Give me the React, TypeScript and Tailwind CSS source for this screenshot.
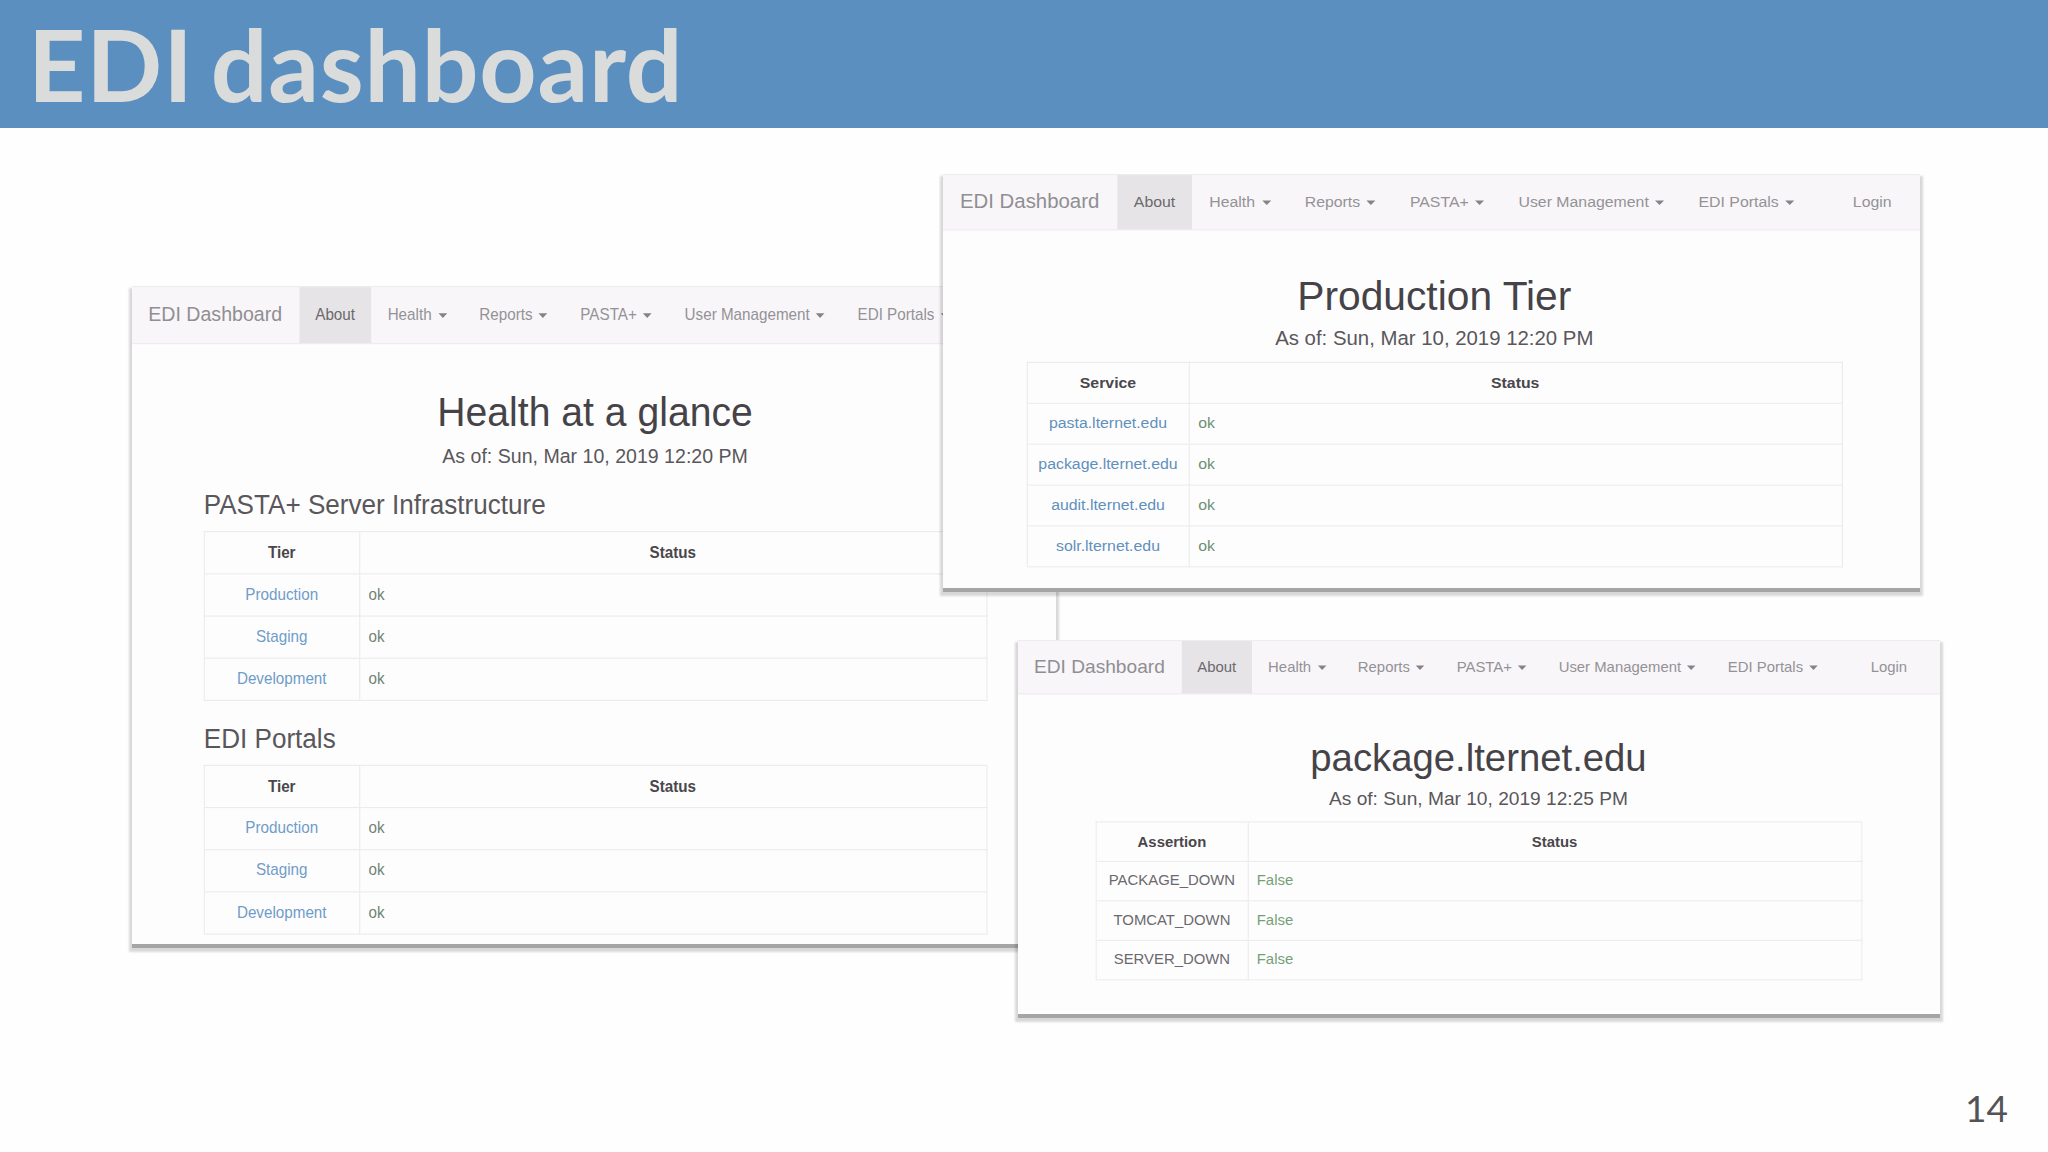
import type { ReactNode } from 'react'

const MENUS = ['Health', 'Reports', 'PASTA+', 'User Management', 'EDI Portals']

function Navbar({ loginPad }: { loginPad: string }) {
  return (
    <nav className="flex h-[51px] shrink-0 items-stretch whitespace-nowrap border-b border-t border-[#efecf0] bg-[#f8f6f9] text-[14px] text-[#949296]">
      <span className="flex items-center pl-[15px] pr-[15.5px] text-[18px] text-[#908e92]">EDI Dashboard</span>
      <span className="flex items-center bg-[#e6e4e7] px-[15px] text-[#6b696d]">About</span>
      {MENUS.map((name) => (
        <span key={name} className="flex items-center px-[15px]">
          {name}
          <span className="ml-[5.9px] h-0 w-0 border-x-4 border-t-4 border-x-transparent border-t-[#858387]" />
        </span>
      ))}
      <span className={`ml-auto flex items-center ${loginPad}`}>Login</span>
    </nav>
  )
}

type Row = { name: string; status: string }

function StatusTable({
  label,
  rows,
  nameClass,
  statusClass,
}: {
  label: string
  rows: Row[]
  nameClass: string
  statusClass: string
}) {
  return (
    <div className="w-[720.5px] border-l border-t border-[#edeaee] text-[14px] leading-5">
      <div className="grid grid-cols-[142.5px_1fr] text-center font-bold text-[#49474b]">
        <div className="h-[37px] border-b border-r border-[#edeaee] pt-[7.5px]">{label}</div>
        <div className="h-[37px] border-b border-r border-[#edeaee] pt-[7.5px]">Status</div>
      </div>
      {rows.map((r) => (
        <div key={r.name} className="grid grid-cols-[142.5px_1fr]">
          <div className={`h-[37px] border-b border-r border-[#edeaee] pt-[7px] text-center ${nameClass}`}>
            {r.name}
          </div>
          <div className={`h-[37px] border-b border-r border-[#edeaee] px-2 pt-[7px] ${statusClass}`}>
            {r.status}
          </div>
        </div>
      ))}
    </div>
  )
}

function Window({
  frame,
  page,
  loginPad,
  title,
  time,
  children,
}: {
  frame: string
  page: string
  loginPad: string
  title: string
  time: string
  children: ReactNode
}) {
  return (
    <section
      className={`absolute bg-[#fefdfe] shadow-[0_4px_0_0_#a5a4a6,0_5px_2px_3px_rgba(0,0,0,0.15)] ${frame}`}
    >
      <div className={`flex origin-top-left flex-col ${page}`}>
        <Navbar loginPad={loginPad} />
        <div className="flex flex-col pt-[40px]">
          <div className="w-[720px] text-center text-[#454347]">
            <h1 className="h-[40px] text-[36px] leading-[40px]">{title}</h1>
            <h4 className="mt-[8px] text-[18px] leading-[20px] text-[#59575b]">{time}</h4>
          </div>
          {children}
        </div>
      </div>
    </section>
  )
}

const TIERS: Row[] = [
  { name: 'Production', status: 'ok' },
  { name: 'Staging', status: 'ok' },
  { name: 'Development', status: 'ok' },
]

const SERVICES: Row[] = [
  { name: 'pasta.lternet.edu', status: 'ok' },
  { name: 'package.lternet.edu', status: 'ok' },
  { name: 'audit.lternet.edu', status: 'ok' },
  { name: 'solr.lternet.edu', status: 'ok' },
]

const ASSERTIONS: Row[] = [
  { name: 'PACKAGE_DOWN', status: 'False' },
  { name: 'TOMCAT_DOWN', status: 'False' },
  { name: 'SERVER_DOWN', status: 'False' },
]

export default function App() {
  return (
    <main className="relative flex h-[1152px] w-[2048px] flex-col justify-between overflow-hidden bg-[#fefefe] font-['Liberation_Sans',Arial,sans-serif]">
      <header className="flex h-32 items-center bg-[#5a8fbf] pb-[2px] pl-[28px]">
        <h1 className="whitespace-nowrap font-['Lato',sans-serif] text-[100px] font-bold leading-[120px] tracking-[0.8px] text-[#dadbdb] [word-spacing:-8px]">
          EDI dashboard
        </h1>
      </header>

      <Window
        frame="left-[132px] top-[286px] h-[658px] w-[924px]"
        page="w-[850px] scale-x-[1.087] scale-y-[1.14] [&>div]:pl-[66px]"
        loginPad="hidden"
        title="Health at a glance"
        time="As of: Sun, Mar 10, 2019 12:20 PM"
      >
        {['PASTA+ Server Infrastructure', 'EDI Portals'].map((group) => (
          <div key={group} className="flex flex-col">
            <h3 className="mb-[10px] mt-[19px] text-[24px] leading-[27px] text-[#59575b]">{group}</h3>
            <StatusTable label="Tier" rows={TIERS} nameClass="text-[#6f9cc8]" statusClass="text-[#6f8474]" />
          </div>
        ))}
      </Window>

      <Window
        frame="left-[943px] top-[174px] h-[414px] w-[977px]"
        page="w-[863px] scale-x-[1.132] scale-y-[1.105] [&>div]:pl-[74px]"
        loginPad="pr-[25px]"
        title="Production Tier"
        time="As of: Sun, Mar 10, 2019 12:20 PM"
      >
        <div className="mt-[11px]">
          <StatusTable label="Service" rows={SERVICES} nameClass="text-[#6090bc]" statusClass="text-[#6b9070]" />
        </div>
      </Window>

      <Window
        frame="left-[1018px] top-[640px] h-[374px] w-[922px]"
        page="w-[867px] scale-x-[1.0635] scale-y-[1.067] [&>div]:pl-[73px]"
        loginPad="pr-[31px]"
        title="package.lternet.edu"
        time="As of: Sun, Mar 10, 2019 12:25 PM"
      >
        <div className="mt-[11px]">
          <StatusTable label="Assertion" rows={ASSERTIONS} nameClass="text-[#6b696d]" statusClass="text-[#73a077]" />
        </div>
      </Window>

      <footer className="flex justify-end pb-[22px] pr-[40px] font-['Lato',sans-serif] text-[37px] leading-[44px] text-[#545356]">
        14
      </footer>
    </main>
  )
}
